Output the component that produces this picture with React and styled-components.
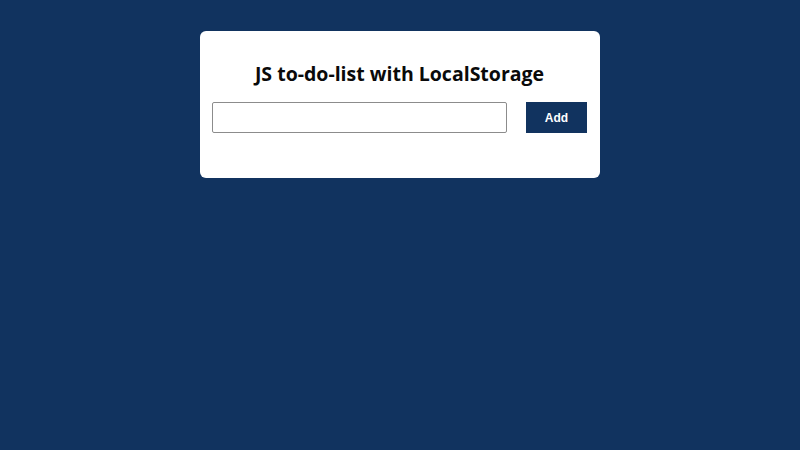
import React, { useState } from "react";
import styled, { createGlobalStyle } from "styled-components";

const GlobalStyle = createGlobalStyle`
  body {
    margin: 0;
    background: #11335f;
    font-family: "Open Sans", sans-serif;
  }
`;

const Page = styled.div`
  display: flex;
  justify-content: center;
  align-items: flex-start;
  padding-top: 31px;
  min-height: 450px;
  box-sizing: border-box;
`;

const Card = styled.div`
  width: 400px;
  box-sizing: border-box;
  background: #fff;
  border-radius: 6px;
  padding: 29px 13px 45px 12px;
`;

const Title = styled.h1`
  margin: 0 0 15px;
  text-align: center;
  font-size: 19.5px;
  line-height: 27px;
  font-weight: 700;
  color: #0a0a0a;
`;

const Row = styled.div`
  display: flex;
  gap: 19px;
  height: 31px;
`;

const Input = styled.input`
  flex: 1;
  height: 31px;
  box-sizing: border-box;
  border: 1px solid #8c8c8c;
  border-radius: 2px;
  padding: 0 8px;
  font-size: 14px;
  outline: none;
`;

const Button = styled.button`
  width: 61px;
  height: 31px;
  border: none;
  background: #11335f;
  color: #fff;
  font-family: "Liberation Sans", Arial, sans-serif;
  font-weight: 700;
  font-size: 12px;
  cursor: pointer;
`;

export default function App() {
  const [task, setTask] = useState("");
  return (
    <>
      <GlobalStyle />
      <Page>
        <Card>
          <Title>JS to-do-list with LocalStorage</Title>
          <Row>
            <Input value={task} onChange={(e) => setTask(e.target.value)} />
            <Button>Add</Button>
          </Row>
        </Card>
      </Page>
    </>
  );
}
